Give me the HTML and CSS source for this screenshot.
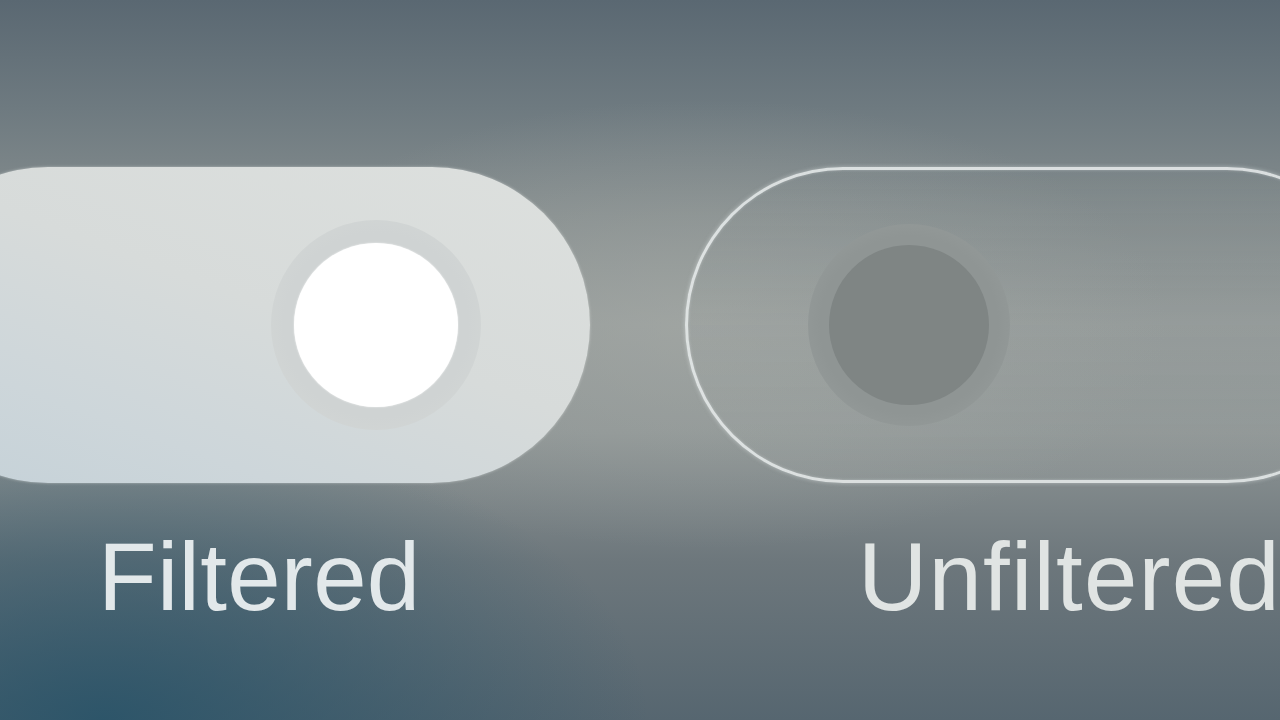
FILE: index.html
```html
<!DOCTYPE html>
<html lang="en">
<head>
<meta charset="utf-8">
<title>Filtered / Unfiltered</title>
<link rel="stylesheet" href="styles.css">
</head>
<body>
<main class="stage">
  <div class="toggle toggle-on">
    <div class="pill pill-on">
      <div class="ring ring-on"><div class="knob knob-on"></div></div>
    </div>
    <div class="label label-on">Filtered</div>
  </div>
  <div class="toggle toggle-off">
    <div class="pill pill-off">
      <div class="ring ring-off"><div class="knob knob-off"></div></div>
    </div>
    <div class="label label-off">Unfiltered</div>
  </div>
</main>
</body>
</html>
```
FILE: styles.css
```css
html, body {
  margin: 0;
  padding: 0;
  width: 1280px;
  height: 720px;
  overflow: hidden;
}
body {
  font-family: "Liberation Sans", Arial, sans-serif;
  background:
    radial-gradient(ellipse 760px 420px at 8% 100%, rgba(38, 82, 104, 0.85), rgba(38, 82, 104, 0) 72%),
    radial-gradient(ellipse 620px 300px at 55% 45%, rgba(168, 172, 168, 0.55), rgba(168, 172, 168, 0) 75%),
    linear-gradient(180deg, #5a6872 0%, #6e7a80 15%, #858d8e 30%, #959b9a 45%, #8e9595 60%, #6d777c 78%, #566670 100%);
}
.stage {
  display: flex;
  align-items: flex-start;
  gap: 95px;
  margin-left: -110px;
  padding-top: 167px;
}
.toggle {
  display: flex;
  flex-direction: column;
  flex: none;
  width: 700px;
}
.pill {
  box-sizing: border-box;
  height: 316px;
  border-radius: 158px;
  display: flex;
  align-items: center;
}
.pill-on {
  justify-content: flex-end;
  padding-right: 109px;
  background: linear-gradient(200deg, #dde0de 0%, #d7dbda 45%, #cdd6da 75%, #c4d1d8 100%);
  box-shadow: 0 0 3px rgba(220, 224, 222, 0.6);
}
.pill-off {
  justify-content: flex-start;
  padding-left: 120px;
  border: 3px solid rgba(228, 233, 233, 0.9);
  background: linear-gradient(180deg, rgba(120, 132, 136, 0.12), rgba(170, 175, 172, 0.22));
  box-shadow: 0 0 4px rgba(230, 235, 235, 0.5), inset 0 0 3px rgba(230, 235, 235, 0.4);
}
.ring {
  width: 210px;
  height: 210px;
  border-radius: 50%;
  display: flex;
  align-items: center;
  justify-content: center;
}
.ring-on {
  background: radial-gradient(circle, #cfd3d3 62%, #d2d6d5 80%, rgba(214, 218, 217, 0) 100%);
}
.ring-off {
  width: 202px;
  height: 202px;
  background: radial-gradient(circle, #8f9594 62%, #959b9a 82%, rgba(150, 156, 155, 0) 100%);
}
.knob {
  border-radius: 50%;
}
.knob-on {
  width: 164px;
  height: 164px;
  background: #ffffff;
  box-shadow: 0 0 2px rgba(255, 255, 255, 0.8);
}
.knob-off {
  width: 160px;
  height: 160px;
  background: #7f8584;
}
.label {
  margin-top: 46px;
  font-size: 96px;
  line-height: 1;
  color: #e2e8ea;
  white-space: nowrap;
}
.label-on {
  padding-left: 208px;
  letter-spacing: 0.3px;
}
.label-off {
  padding-left: 173px;
  letter-spacing: 1.2px;
  color: #e0e4e3;
}
```
